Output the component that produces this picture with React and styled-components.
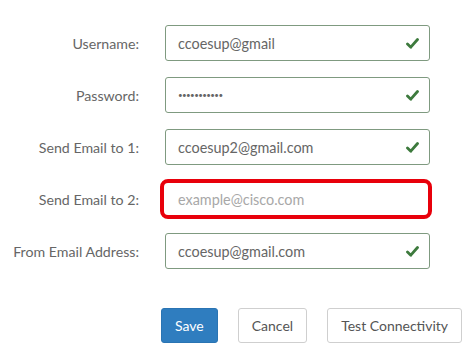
import React from 'react';
import styled, { createGlobalStyle } from 'styled-components';

const GlobalStyle = createGlobalStyle`
    body {
        margin: 0;
        background: #ffffff;
        font-family: Lato, "Open Sans", sans-serif;
    }
`;

const fields = [
    { label: 'Username:', value: 'ccoesup@gmail', valid: true },
    { label: 'Password:', value: '•••••••••••', valid: true, secret: true },
    { label: 'Send Email to 1:', value: 'ccoesup2@gmail.com', valid: true },
    { label: 'Send Email to 2:', placeholder: 'example@cisco.com', highlight: true },
    { label: 'From Email Address:', value: 'ccoesup@gmail.com', valid: true },
];

function CheckIcon() {
    return (
        <svg width="13" height="11" viewBox="0 0 13 11">
            <path d="M1.5 6 L4.8 9.2 L11.5 1.5" fill="none" stroke="#3d7a3d" strokeWidth="2.8" strokeLinecap="round" strokeLinejoin="round" />
        </svg>
    );
}

function App() {
    return (
        <Page>
            <GlobalStyle />
            <Form>
                {fields.map((f) => (
                    <Row key={f.label}>
                        <Label>{f.label}</Label>
                        <Field $highlight={f.highlight}>
                            {f.value
                                ? <Value $secret={f.secret}>{f.value}</Value>
                                : <Placeholder>{f.placeholder}</Placeholder>}
                            {f.valid && <CheckIcon />}
                        </Field>
                    </Row>
                ))}
            </Form>
            <Actions>
                <Button $primary>Save</Button>
                <Button>Cancel</Button>
                <Button>Test Connectivity</Button>
            </Actions>
        </Page>
    );
}

const Page = styled.div`
    width: 474px;
    height: 355px;
    padding-top: 17px;
    box-sizing: border-box;
    overflow: hidden;
`;

const Form = styled.div`
    display: grid;
    grid-auto-rows: 52px;
`;

const Row = styled.div`
    display: grid;
    grid-template-columns: 139px 265px;
    column-gap: 26px;
    align-items: center;
`;

const Label = styled.div`
    text-align: right;
    font-size: 14.2px;
    color: #666666;
    white-space: nowrap;
`;

const Field = styled.div`
    display: flex;
    align-items: center;
    justify-content: space-between;
    height: 36px;
    box-sizing: border-box;
    padding: 0 10px 0 12px;
    border: 1px solid #7f9a80;
    border-radius: 3px;
    background: #ffffff;
    ${(p) => p.$highlight && `
        height: 40px;
        margin: 0 -2px 0 -5px;
        padding-left: 14px;
        border: 4px solid #e8000b;
        border-radius: 8px;
    `}
`;

const Value = styled.span`
    font-size: ${(p) => (p.$secret ? '8px' : '14.4px')};
    letter-spacing: ${(p) => (p.$secret ? '-0.6px' : '0')};
    color: #666666;
`;

const Placeholder = styled.span`
    font-size: 14.4px;
    color: #a8a8a8;
`;

const Actions = styled.div`
    display: flex;
    gap: 20px;
    margin: 31px 0 0 161px;
`;

const Button = styled.button`
    height: 35px;
    padding: 0 13px;
    font-family: Lato, "Open Sans", sans-serif;
    font-size: 14px;
    border-radius: 3px;
    border: 1px solid ${(p) => (p.$primary ? '#2a74b3' : '#cfcfcf')};
    background: ${(p) => (p.$primary ? '#2f7dbf' : '#ffffff')};
    color: ${(p) => (p.$primary ? '#ffffff' : '#555555')};
`;

export default App;
